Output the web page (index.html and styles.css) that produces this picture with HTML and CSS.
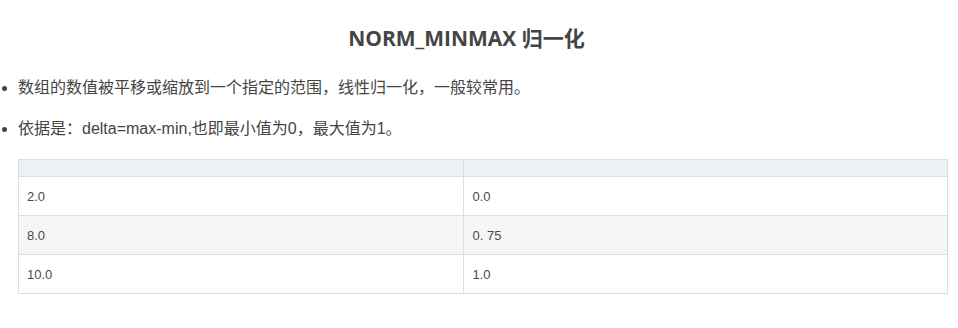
FILE: index.html
```html
<!DOCTYPE html>
<html lang="zh-CN">
<head>
    <meta charset="UTF-8">
    <title>NORM_MINMAX 归一化</title>
    <link rel="stylesheet" href="styles.css">
</head>
<body>
    <div class="content">
        <h3 class="section-title">NORM_MINMAX 归一化</h3>

        <ul class="notes">
            <li>数组的数值被平移或缩放到一个指定的范围，线性归一化，一般较常用。</li>
            <li>依据是：delta=max-min,也即最小值为0，最大值为1。</li>
        </ul>

        <table class="data-table">
            <thead>
                <tr>
                    <th></th>
                    <th></th>
                </tr>
            </thead>
            <tbody>
                <tr>
                    <td>2.0</td>
                    <td>0.0</td>
                </tr>
                <tr>
                    <td>8.0</td>
                    <td>0. 75</td>
                </tr>
                <tr>
                    <td>10.0</td>
                    <td>1.0</td>
                </tr>
            </tbody>
        </table>
    </div>
</body>
</html>
```

FILE: styles.css
```css
/* Page basics */
body {
    margin: 0;
    background-color: #ffffff;
    color: #444444;
    font-family: "Liberation Sans", "Noto Sans CJK SC", Arial, sans-serif;
}
.content {
    padding: 0 10px 0 18px;
}
.section-title {
    margin: 0;
    padding: 24px 33px 0 0;
    font-family: "Open Sans", "Noto Sans CJK SC", sans-serif;
    font-size: 21px;
    font-weight: 700;
    line-height: 28px;
    text-align: center;
    color: #454545;
}
/* Bullet list */
.notes {
    margin: 24px 0 0 -18px;
    padding: 0 0 0 18px;
    font-size: 16px;
    line-height: 24px;
}
.notes li + li {
    margin-top: 17px;
}
/* Result table */
.data-table {
    width: 100%;
    margin-top: 18px;
    border-collapse: collapse;
    font-size: 13px;
    color: #4a4a4a;
}
.data-table th,
.data-table td {
    border: 1px solid #dddddd;
    padding: 0 8px;
    text-align: left;
}
.data-table th {
    height: 16px;
    background-color: #eef1f4;
}
.data-table td {
    height: 38px;
}
.data-table tbody tr:nth-child(even) {
    background-color: #f6f6f6;
}
```
